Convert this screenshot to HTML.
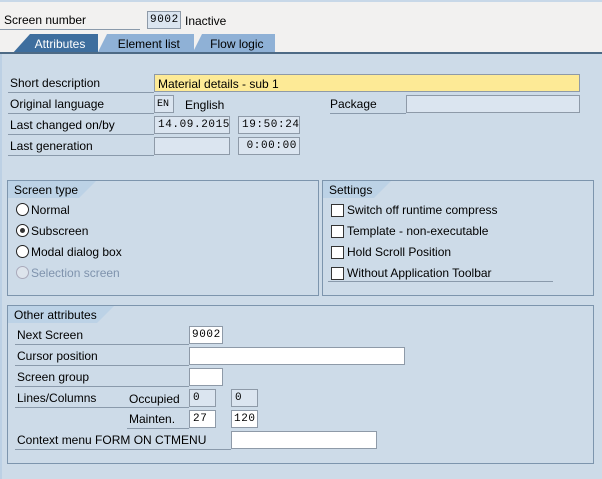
<!DOCTYPE html><html><head><style>
body{margin:0;width:602px;height:479px;overflow:hidden;background:#f2f1f0;font-family:"Liberation Sans",Arial,sans-serif;font-size:12px;color:#000;position:relative}
.a{position:absolute}
.lbl{position:absolute;height:18px;line-height:19px;border-bottom:1px solid #8a9aab;box-sizing:border-box;height:19px}
.f{position:absolute;line-height:17px;border:1px solid #8e9aa8;box-sizing:border-box;height:18px;font-family:"Liberation Mono",monospace;font-size:11px;padding-left:3px;letter-spacing:0.6px;white-space:nowrap;overflow:hidden}
.ro{background:#dbe5f0}
.w{background:#fff}
.grp{position:absolute;border:1px solid #7d95ad;box-sizing:border-box}
.gh{position:absolute;left:0;top:0;height:17px;line-height:18px;padding-left:6px;background:#bcd2e6;clip-path:polygon(0 0,100% 0,calc(100% - 17px) 100%,0 100%)}
.rb{position:absolute;width:11px;height:11px;border:1px solid #222;border-radius:50%;background:#fff}
.cb{position:absolute;width:11px;height:11px;border:1px solid #333;background:#fff}
.t{position:absolute;line-height:14px}
</style></head><body>
<div class="a" style="left:0;top:0;width:602px;height:2px;background:#c8d8e8"></div>
<div class="lbl" style="left:0;top:11px;width:140px;padding-left:4px">Screen number</div>
<div class="f ro" style="left:147px;top:11px;width:34px;padding-left:2px">9002</div>
<div class="a" style="left:185px;top:12px;line-height:18px">Inactive</div>
<div class="a" style="left:97px;top:34px;width:97px;height:20px;background:#8fb1d6;clip-path:polygon(10px 0,100% 0,100% 100%,0 100%);line-height:21px;text-align:center">&nbsp;&nbsp;Element list</div>
<div class="a" style="left:192px;top:34px;width:83px;height:20px;background:#8fb1d6;clip-path:polygon(10px 0,100% 0,100% 100%,0 100%);line-height:21px;text-align:center">&nbsp;&nbsp;Flow logic</div>
<div class="a" style="left:12px;top:34px;width:86px;height:20px;background:#3e6e9e;clip-path:polygon(18px 0,100% 0,100% 100%,0 100%);color:#fff;line-height:21px;text-align:center">&nbsp;&nbsp;&nbsp;Attributes</div>
<div class="a" style="left:0;top:52px;width:602px;height:2px;background:#4d6a85"></div>
<div class="a" style="left:0;top:54px;width:602px;height:425px;background:#cddbe8"></div>
<div class="a" style="left:0;top:54px;width:2px;height:425px;background:#bcd0e4"></div>
<div class="lbl" style="left:8px;top:74px;width:146px;padding-left:2px">Short description</div>
<div class="f" style="left:154px;top:74px;width:426px;background:#fdea96;font-family:'Liberation Sans',sans-serif;font-size:12px;letter-spacing:0;line-height:18px">Material details - sub 1</div>
<div class="lbl" style="left:8px;top:95px;width:146px;padding-left:2px">Original language</div>
<div class="f ro" style="left:154px;top:95px;width:20px;font-size:10px;padding-left:2px;letter-spacing:0">EN</div>
<div class="a" style="left:185px;top:96px;line-height:18px">English</div>
<div class="lbl" style="left:330px;top:95px;width:76px">Package</div>
<div class="f ro" style="left:406px;top:95px;width:174px"></div>
<div class="lbl" style="left:8px;top:116px;width:146px;padding-left:2px">Last changed on/by</div>
<div class="f ro" style="left:154px;top:116px;width:76px">14.09.2015</div>
<div class="f ro" style="left:238px;top:116px;width:62px">19:50:24</div>
<div class="lbl" style="left:8px;top:137px;width:146px;padding-left:2px">Last generation</div>
<div class="f ro" style="left:154px;top:137px;width:76px"></div>
<div class="f ro" style="left:238px;top:137px;width:62px;text-align:right;padding-right:2px">0:00:00</div>
<div class="grp" style="left:7px;top:180px;width:312px;height:116px"><div class="gh" style="width:82px">Screen type</div></div>
<div class="rb" style="left:16px;top:203px"></div><div class="t" style="left:31px;top:203px">Normal</div>
<div class="rb" style="left:16px;top:224px"></div><div class="a" style="left:20px;top:228px;width:5px;height:5px;border-radius:50%;background:#333"></div><div class="t" style="left:31px;top:224px">Subscreen</div>
<div class="rb" style="left:16px;top:245px"></div><div class="t" style="left:31px;top:245px">Modal dialog box</div>
<div class="rb" style="left:16px;top:266px;border-color:#aab;background:#dde4ec"></div><div class="t" style="left:31px;top:266px;color:#7f93ad">Selection screen</div>
<div class="grp" style="left:322px;top:180px;width:272px;height:116px"><div class="gh" style="width:62px">Settings</div></div>
<div class="cb" style="left:331px;top:204px"></div><div class="t" style="left:347px;top:203px">Switch off runtime compress</div>
<div class="cb" style="left:331px;top:225px"></div><div class="t" style="left:347px;top:224px">Template - non-executable</div>
<div class="cb" style="left:331px;top:246px"></div><div class="t" style="left:347px;top:245px">Hold Scroll Position</div>
<div class="cb" style="left:331px;top:267px"></div><div class="t" style="left:347px;top:266px">Without Application Toolbar</div>
<div class="a" style="left:328px;top:281px;width:225px;height:1px;background:#8a9aab"></div>
<div class="grp" style="left:7px;top:305px;width:587px;height:159px"><div class="gh" style="width:100px">Other attributes</div></div>
<div class="lbl" style="left:15px;top:326px;width:174px;padding-left:2px">Next Screen</div>
<div class="f w" style="left:189px;top:326px;width:34px;padding-left:2px">9002</div>
<div class="lbl" style="left:15px;top:347px;width:174px;padding-left:2px">Cursor position</div>
<div class="f w" style="left:189px;top:347px;width:216px"></div>
<div class="lbl" style="left:15px;top:368px;width:174px;padding-left:2px">Screen group</div>
<div class="f w" style="left:189px;top:368px;width:34px"></div>
<div class="lbl" style="left:15px;top:389px;width:174px;padding-left:2px">Lines/Columns</div>
<div class="a" style="left:129px;top:390px;line-height:18px">Occupied</div>
<div class="f ro" style="left:189px;top:389px;width:27px">0</div>
<div class="f ro" style="left:231px;top:389px;width:27px">0</div>
<div class="lbl" style="left:127px;top:410px;width:62px;padding-left:2px">Mainten.</div>
<div class="f w" style="left:189px;top:410px;width:27px">27</div>
<div class="f w" style="left:231px;top:410px;width:27px;padding-left:2px">120</div>
<div class="lbl" style="left:15px;top:431px;width:216px;padding-left:2px">Context menu FORM ON CTMENU</div>
<div class="f w" style="left:231px;top:431px;width:146px"></div>
</body></html>
